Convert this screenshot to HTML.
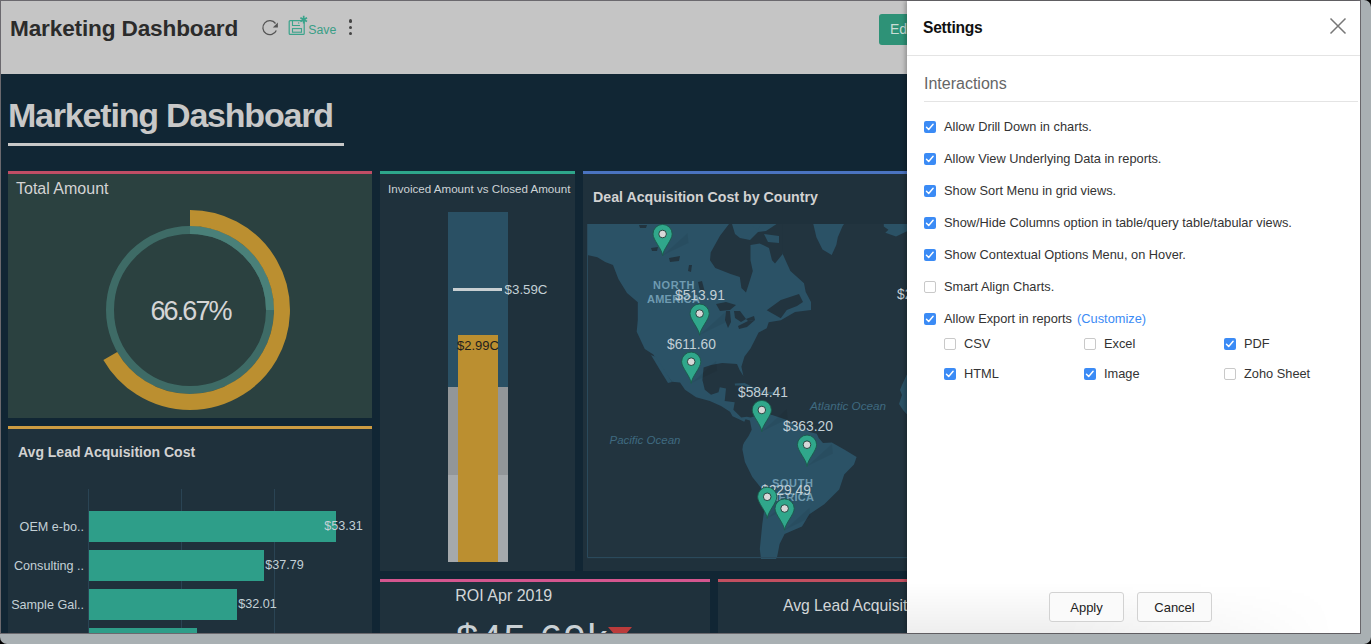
<!DOCTYPE html>
<html><head><meta charset="utf-8">
<style>
*{box-sizing:border-box;margin:0;padding:0}
html,body{width:1371px;height:644px;overflow:hidden;background:#000;font-family:"Liberation Sans",sans-serif}
#frame{position:absolute;left:0;top:0;width:1371px;height:644px;background:#a9b0b3;border-radius:0 7px 7px 7px}
.abs{position:absolute}
#win{position:absolute;left:0;top:0;width:1361px;height:634px;overflow:hidden;background:#112634}
.t{position:absolute;white-space:nowrap;line-height:1}
.w{position:absolute;background:#1f313c}
#panel{position:absolute;left:907px;top:1px;width:453px;height:632px;background:#fff;box-shadow:-2px 0 4px rgba(0,0,0,0.25)}
.cb{position:absolute;width:12px;height:12px;border-radius:2px}
.cb.on{background:#3b8bf5}
.cb.off{border:1px solid #c9c9c9;background:#fff}
.cb svg{position:absolute;left:0;top:0}
.btn{position:absolute;width:75px;height:30px;border:1px solid #d2d2d2;border-radius:3px;background:#fafafa;font-size:13px;color:#222;text-align:center;line-height:30px}
.lbl{position:absolute;font-size:12.8px;color:#333;white-space:nowrap;line-height:16px}
.dl{color:#c3d0d6;font-size:13px}
.ml{color:#c3d0d6;font-size:13.8px}
</style></head>
<body>
<div id="frame"></div>
<div id="win">
  <!-- header -->
  <div class="abs" style="left:1px;top:1px;width:1359px;height:73px;background:#c5c5c5"></div>
  <div class="t" style="left:10px;top:17.6px;font-size:22.6px;letter-spacing:-0.15px;font-weight:bold;color:#2b2b2b">Marketing Dashboard</div>
  <svg class="abs" style="left:260px;top:18px" width="20" height="19" viewBox="260 18 20 19">
    <path d="M275.5,23.5 A7,7 0 1 0 276.3,30.5" fill="none" stroke="#555" stroke-width="1.3"/>
    <path d="M272.8,27.6 L277.9,27.6 L277.9,22.6 Z" fill="#555"/>
  </svg>
  <svg class="abs" style="left:286px;top:14px" width="24" height="23" viewBox="286 14 24 23">
    <rect x="289.2" y="20.6" width="15" height="13.8" rx="1" fill="none" stroke="#3aa38b" stroke-width="1.2"/>
    <path d="M292.5,21 V25.5 H300" fill="none" stroke="#3aa38b" stroke-width="1.1"/>
    <rect x="292.5" y="28.6" width="9" height="3.6" fill="none" stroke="#3aa38b" stroke-width="1.1"/>
    <circle cx="298.7" cy="23" r="0.7" fill="#3aa38b"/>
    <path d="M303.7,15.8 V23.4 M300.4,17.7 L307,21.5 M307,17.7 L300.4,21.5" stroke="#3aa38b" stroke-width="1.7"/>
  </svg>
  <div class="t" style="left:308.3px;top:24px;font-size:12.3px;color:#3a9e86">Save</div>
  <div class="abs" style="left:349.2px;top:19.4px;width:3.2px;height:3.2px;border-radius:50%;background:#444"></div>
  <div class="abs" style="left:349.2px;top:25.5px;width:3.2px;height:3.2px;border-radius:50%;background:#444"></div>
  <div class="abs" style="left:349.2px;top:31.5px;width:3.2px;height:3.2px;border-radius:50%;background:#444"></div>
  <div class="abs" style="left:879px;top:14px;width:40px;height:31px;background:#2e9277;border-radius:3px"></div>
  <div class="t" style="left:890px;top:22px;font-size:14px;color:#c9ddd6">Ed</div>

  <!-- dashboard title -->
  <div class="t" style="left:8px;top:97.5px;font-size:34px;letter-spacing:-1.2px;font-weight:bold;color:#c8c8c8">Marketing Dashboard</div>
  <div class="abs" style="left:8px;top:143px;width:336px;height:3px;background:#c8c8c8"></div>

  <!-- W1 Total Amount -->
  <div class="w" style="left:8px;top:171px;width:364px;height:247px;background:#2b4140;border-top:3px solid #c04d65"></div>
  <div class="t" style="left:16px;top:181px;font-size:16px;color:#d4d4d4">Total Amount</div>
  <svg class="abs" style="left:80px;top:200px" width="220" height="220" viewBox="80 200 220 220">
    <circle cx="190" cy="310" r="80" fill="none" stroke="#3e6b66" stroke-width="8"/>
    <path d="M190,230 A80,80 0 0 1 270,310" fill="none" stroke="#4a8079" stroke-width="8"/>
    <path d="M190,218 A92,92 0 1 1 110.3,356" fill="none" stroke="#bb8f30" stroke-width="16"/>
  </svg>
  <div class="t" style="left:150.5px;top:297.5px;font-size:27px;letter-spacing:-1.9px;color:#d5d5d5">66.67%</div>

  <!-- W2 Avg Lead Acquisition Cost -->
  <div class="w" style="left:8px;top:426px;width:364px;height:210px;border-top:3px solid #cc9b42"></div>
  <div class="t" style="left:18px;top:444.7px;font-size:14px;font-weight:bold;color:#d2d2d2">Avg Lead Acquisition Cost</div>
  <div class="abs" style="left:88px;top:489px;width:1px;height:150px;background:#2a4454"></div>
  <div class="abs" style="left:181px;top:489px;width:1px;height:150px;background:#2a4454"></div>
  <div class="abs" style="left:274px;top:489px;width:1px;height:150px;background:#2a4454"></div>
  <div class="abs" style="left:89px;top:511px;width:247px;height:31px;background:#2e9e89"></div>
  <div class="abs" style="left:89px;top:550px;width:175px;height:31px;background:#2e9e89"></div>
  <div class="abs" style="left:89px;top:589px;width:148px;height:31px;background:#2e9e89"></div>
  <div class="abs" style="left:89px;top:628px;width:108px;height:31px;background:#2e9e89"></div>
  <div class="t dl" style="font-size:12.6px;right:1277px;top:520.5px">OEM e-bo..</div>
  <div class="t dl" style="font-size:12.6px;right:1277px;top:559.5px">Consulting ..</div>
  <div class="t dl" style="font-size:12.6px;right:1277px;top:598.5px">Sample Gal..</div>
  <div class="t dl" style="left:324.3px;top:520.4px;font-size:12.6px">$53.31</div>
  <div class="t dl" style="left:265.3px;top:559.4px;font-size:12.6px">$37.79</div>
  <div class="t dl" style="left:238.3px;top:598.4px;font-size:12.6px">$32.01</div>

  <!-- W3 Invoiced -->
  <div class="w" style="left:380px;top:171px;width:195px;height:400px;border-top:3px solid #2ea68b"></div>
  <div class="t" style="left:388px;top:183px;font-size:11.6px;color:#cdd3d6">Invoiced Amount vs Closed Amount</div>
  <div class="abs" style="left:447.7px;top:212px;width:60.3px;height:175px;background:#2a5064"></div>
  <div class="abs" style="left:447.7px;top:387px;width:60.3px;height:88px;background:#929699"></div>
  <div class="abs" style="left:447.7px;top:475px;width:60.3px;height:87px;background:#a5a9ac"></div>
  <div class="abs" style="left:457.6px;top:334.5px;width:40.2px;height:227.5px;background:#bb8f30"></div>
  <div class="abs" style="left:453px;top:288px;width:49px;height:3px;background:#c8cfd2"></div>
  <div class="t dl" style="left:504.6px;top:283px;font-size:13.3px">$3.59C</div>
  <div class="t" style="left:457px;top:339px;font-size:13px;color:#1e1e1e">$2.99C</div>

  <!-- W4 Deal -->
  <div class="w" style="left:583px;top:171px;width:330px;height:400px;border-top:3px solid #4a73c0"></div>
  <div class="t" style="left:593px;top:190.3px;font-size:14.2px;font-weight:bold;color:#d2d2d2">Deal Acquisition Cost by Country</div>
  <svg class="abs" style="left:587px;top:224px" width="320" height="335" viewBox="587 224 320 335">
<rect x="587" y="224" width="320" height="335" fill="#22343f"/>
<polygon points="587,224 776.6,224 779.6,240.4 782.7,254 790.4,271 804,283.3 805.7,292 811,302 811,310 795,312 780.8,320.3 768.7,322.3 766.7,328.3 758.6,332.4 754.6,340.4 750.5,348.5 744.5,356.6 741.4,366.7 743.4,376.1 739.6,370 737,364 733.4,363.7 722.2,363.1 711,365 703.6,367.5 702.4,379.9 704.8,389.8 711,394.8 718.5,392.3 719.8,387.3 726,388.6 724.7,401 734.7,402.2 733.4,409.7 736.2,412.5 741.2,417.4 746.8,416.8 750.5,417.4 759.5,414.7 772.2,414.9 787,420 809.4,432 816.8,433.7 818.7,438 823,443 831.8,442.4 844.2,449.6 856.6,457 854,464.5 844.2,474.5 839.2,489.4 824.3,504.2 809.4,514.2 802,526.6 784.6,534 779.6,544 777.2,556.4 776,559 761,559 759.8,549 762.3,524 764.7,506.7 762.3,489.4 752.3,477 744.9,462 742.4,449.6 743,445 744.3,442.3 748.6,436 751.7,429.8 749.9,420.5 745.5,419.3 744.3,421.8 738,418.7 732.5,416.2 730,411.8 721,406 709.8,401 696.1,397.3 685,389.8 680,382.4 672,381.7 660,366 653.3,354.4 644.8,349 636.7,331.8 637.8,320 637.8,302.3 627,293 618.4,279 613,265 605.2,262 597.4,257.3 587.3,255" fill="#2b5266"/>
<polygon points="651,355 656,357 672,382 668,383 660,370" fill="#2b5266"/>
<polygon points="813.3,224 844,224 842.4,226.6 837.8,237.3 836.3,245 831.7,255 822.5,249.6 816.4,237.3" fill="#2b5266"/>
<polygon points="883.8,224 907,224 907,231.2 896,236.5 885.3,232.7 888.4,229.7 883.8,226.6" fill="#2b5266"/>
<polygon points="906.6,375 902,385 900,390 902,395 899,404 903,410 906.6,414 907,414 907,375" fill="#2b5266"/>
<polygon points="734.7,383.6 744.6,383 755.8,388.6 767,392.3 766,393.8 755,390.5 744,385.5 735,385.5" fill="#2b5266"/>
<polygon points="767,391.7 774.4,392 774,394.8 767.5,394" fill="#2b5266"/>
<polygon points="729,224 732,224 735,234 740,238 750,240 758,232 766,231 776.6,224 782.7,224 782.7,254 775,263.4 772,260.3 769,248 759.7,243.4 750.5,245 750.5,260.3 752.8,271 749,283.3 746,292.5 741.4,288 739.8,277 730.6,274 715.3,268 710,260.3 710.7,252.6 720,235.8" fill="#22343f"/>
<polygon points="766.7,310.2 780.8,300 799,294 803,302 797,306 786.8,310 780.8,318.2" fill="#22343f"/>
<polygon points="716,304 726,302 736,305 730,310 720,311" fill="#22343f"/><polygon points="726,311 730,311 731,322 728,328 725,320" fill="#22343f"/><polygon points="734,311 740,311 746,319 741,322 735,318" fill="#22343f"/><polygon points="738,326 748,321 755,320 747,327 739,329" fill="#22343f"/><polygon points="746,319 754,316 755,320 748,321" fill="#22343f"/><polygon points="639,225 647,225 646,228 640,228" fill="#22343f"/><polygon points="651,248 658,247 657,251 652,251" fill="#22343f"/><polygon points="669,258 680,256 679,261 670,262" fill="#22343f"/><polygon points="689,265 692,265 691,272 688,271" fill="#22343f"/><polygon points="698,282 702,281 704.6,291 700,291" fill="#22343f"/>
<polygon points="764,234 779,236 779,243 768,242" fill="#2b5266"/><polygon points="752,226 760,226 758,230" fill="#2b5266"/>
<path d="M587.5,224 V557.5 H907" fill="none" stroke="#2a4a5c" stroke-width="1"/>
</svg>
  <div class="t" style="left:653px;top:279.5px;font-size:11px;font-weight:bold;color:#6f9bb1;letter-spacing:0.6px">NORTH</div>
  <div class="t" style="left:647px;top:293.5px;font-size:11px;font-weight:bold;color:#6f9bb1;letter-spacing:0.25px">AMERICA</div>
  <div class="t" style="left:772px;top:477.5px;font-size:11px;font-weight:bold;color:#6f9bb1;letter-spacing:0.6px">SOUTH</div>
  <div class="t" style="left:761px;top:491.5px;font-size:11px;font-weight:bold;color:#6f9bb1;letter-spacing:0.25px">AMERICA</div>
  <div class="t" style="left:609.5px;top:434.5px;font-size:11.5px;font-style:italic;color:#3f6a80">Pacific Ocean</div>
  <div class="t" style="left:810px;top:399.5px;font-size:11.7px;font-style:italic;color:#3f6a80">Atlantic Ocean</div>
  <div class="t ml" style="left:675px;top:289px">$513.91</div>
  <div class="t ml" style="left:667px;top:338px">$611.60</div>
  <div class="t ml" style="left:738px;top:386px">$584.41</div>
  <div class="t ml" style="left:783px;top:420px">$363.20</div>
  <div class="t ml" style="left:761px;top:484px">$229.49</div>
  <div class="t ml" style="left:897px;top:288px">$2</div>
  <svg class="abs" style="left:587px;top:224px" width="320" height="335" viewBox="587 224 320 335"><path d="M662.6,255.5 L687.6,233 L688.6,243 Z" fill="#000" opacity="0.05"/><path d="M662.6,255.7 C662.1,249 653.0,240 653.0,234 A9.6 9.6 0 1 1 672.2,234 C672.2,240 663.1,249 662.6,255.7 Z" fill="#30a78b" stroke="#1b5a4b" stroke-width="0.9"/><circle cx="662.6" cy="234" r="3.8" fill="#d8d8d8" stroke="#1e3a36" stroke-width="0.9"/><path d="M699.6,335.1 L724.6,312.6 L725.6,322.6 Z" fill="#000" opacity="0.05"/><path d="M699.6,335.3 C699.1,328.6 690.0,319.6 690.0,313.6 A9.6 9.6 0 1 1 709.2,313.6 C709.2,319.6 700.1,328.6 699.6,335.3 Z" fill="#30a78b" stroke="#1b5a4b" stroke-width="0.9"/><circle cx="699.6" cy="313.6" r="3.8" fill="#d8d8d8" stroke="#1e3a36" stroke-width="0.9"/><path d="M691.2,383.2 L716.2,360.7 L717.2,370.7 Z" fill="#000" opacity="0.05"/><path d="M691.2,383.4 C690.7,376.7 681.6,367.7 681.6,361.7 A9.6 9.6 0 1 1 700.8000000000001,361.7 C700.8000000000001,367.7 691.7,376.7 691.2,383.4 Z" fill="#30a78b" stroke="#1b5a4b" stroke-width="0.9"/><circle cx="691.2" cy="361.7" r="3.8" fill="#d8d8d8" stroke="#1e3a36" stroke-width="0.9"/><path d="M761.8,431.5 L786.8,409 L787.8,419 Z" fill="#000" opacity="0.05"/><path d="M761.8,431.7 C761.3,425 752.1999999999999,416 752.1999999999999,410 A9.6 9.6 0 1 1 771.4,410 C771.4,416 762.3,425 761.8,431.7 Z" fill="#30a78b" stroke="#1b5a4b" stroke-width="0.9"/><circle cx="761.8" cy="410" r="3.8" fill="#d8d8d8" stroke="#1e3a36" stroke-width="0.9"/><path d="M807,466.2 L832,443.7 L833,453.7 Z" fill="#000" opacity="0.05"/><path d="M807,466.4 C806.5,459.7 797.4,450.7 797.4,444.7 A9.6 9.6 0 1 1 816.6,444.7 C816.6,450.7 807.5,459.7 807,466.4 Z" fill="#30a78b" stroke="#1b5a4b" stroke-width="0.9"/><circle cx="807" cy="444.7" r="3.8" fill="#d8d8d8" stroke="#1e3a36" stroke-width="0.9"/><path d="M767.2,518.3 L792.2,495.8 L793.2,505.8 Z" fill="#000" opacity="0.05"/><path d="M767.2,518.5 C766.7,511.8 757.6,502.8 757.6,496.8 A9.6 9.6 0 1 1 776.8000000000001,496.8 C776.8000000000001,502.8 767.7,511.8 767.2,518.5 Z" fill="#30a78b" stroke="#1b5a4b" stroke-width="0.9"/><circle cx="767.2" cy="496.8" r="3.8" fill="#d8d8d8" stroke="#1e3a36" stroke-width="0.9"/><path d="M784.6,530.0 L809.6,507.5 L810.6,517.5 Z" fill="#000" opacity="0.05"/><path d="M784.6,530.2 C784.1,523.5 775.0,514.5 775.0,508.5 A9.6 9.6 0 1 1 794.2,508.5 C794.2,514.5 785.1,523.5 784.6,530.2 Z" fill="#30a78b" stroke="#1b5a4b" stroke-width="0.9"/><circle cx="784.6" cy="508.5" r="3.8" fill="#d8d8d8" stroke="#1e3a36" stroke-width="0.9"/></svg>

  <!-- W5 ROI -->
  <div class="w" style="left:380px;top:579px;width:330px;height:60px;border-top:3px solid #d4568f"></div>
  <div class="t" style="left:455.3px;top:587.8px;font-size:16px;color:#d2d6d8">ROI Apr 2019</div>
  <div class="t" style="left:456px;top:619px;font-size:40px;letter-spacing:1.5px;color:#c9d0d4">$45.69k</div>
  <div class="abs" style="left:608px;top:627px;width:0;height:0;border-left:12px solid transparent;border-right:12px solid transparent;border-top:14px solid #bb3b3b"></div>

  <!-- W6 -->
  <div class="w" style="left:718px;top:579px;width:200px;height:60px;border-top:3px solid #c24f60"></div>
  <div class="t" style="left:783px;top:598.3px;font-size:15.7px;color:#d2d6d8">Avg Lead Acquisition Cost</div>

  <!-- window borders -->
  <div class="abs" style="left:0;top:0;width:1361px;height:1px;background:#6b696e"></div>
  <div class="abs" style="left:0;top:0;width:1px;height:634px;background:#6b696e"></div>
  <div class="abs" style="left:1360px;top:0;width:1px;height:634px;background:#6b696e"></div>
  <div class="abs" style="left:0;top:633px;width:1361px;height:1px;background:#6b696e"></div>

  <div id="panel">
    <div class="abs" style="left:0;top:582px;width:453px;height:50px;background:linear-gradient(rgba(0,0,0,0),rgba(0,0,0,0.065));-webkit-mask-image:linear-gradient(to right,#000 35%,transparent 95%)"></div>
    <div class="abs" style="left:16px;top:17.6px;font-size:15.6px;letter-spacing:-0.25px;font-weight:bold;color:#111">Settings</div>
    <div class="abs" style="left:0;top:54px;width:453px;height:1px;background:#e4e4e4"></div>
    <div class="abs" style="left:17px;top:74px;font-size:16px;color:#666">Interactions</div>
    <div class="abs" style="left:17px;top:100px;width:434px;height:1px;background:#e4e4e4"></div>
    <div class="cb on" style="left:17px;top:120px"><svg width="12" height="12" viewBox="0 0 12 12"><path d="M2.5,6.2 L4.7,8.5 L9.1,3.2" stroke="#fff" stroke-width="1.45" fill="none" stroke-linecap="round" stroke-linejoin="round"/></svg></div>
    <div class="lbl" style="left:37px;top:118px">Allow Drill Down in charts.</div>
    <div class="cb on" style="left:17px;top:152px"><svg width="12" height="12" viewBox="0 0 12 12"><path d="M2.5,6.2 L4.7,8.5 L9.1,3.2" stroke="#fff" stroke-width="1.45" fill="none" stroke-linecap="round" stroke-linejoin="round"/></svg></div>
    <div class="lbl" style="left:37px;top:150px">Allow View Underlying Data in reports.</div>
    <div class="cb on" style="left:17px;top:184px"><svg width="12" height="12" viewBox="0 0 12 12"><path d="M2.5,6.2 L4.7,8.5 L9.1,3.2" stroke="#fff" stroke-width="1.45" fill="none" stroke-linecap="round" stroke-linejoin="round"/></svg></div>
    <div class="lbl" style="left:37px;top:182px">Show Sort Menu in grid views.</div>
    <div class="cb on" style="left:17px;top:216px"><svg width="12" height="12" viewBox="0 0 12 12"><path d="M2.5,6.2 L4.7,8.5 L9.1,3.2" stroke="#fff" stroke-width="1.45" fill="none" stroke-linecap="round" stroke-linejoin="round"/></svg></div>
    <div class="lbl" style="left:37px;top:214px">Show/Hide Columns option in table/query table/tabular views.</div>
    <div class="cb on" style="left:17px;top:248px"><svg width="12" height="12" viewBox="0 0 12 12"><path d="M2.5,6.2 L4.7,8.5 L9.1,3.2" stroke="#fff" stroke-width="1.45" fill="none" stroke-linecap="round" stroke-linejoin="round"/></svg></div>
    <div class="lbl" style="left:37px;top:246px">Show Contextual Options Menu, on Hover.</div>
    <div class="cb off" style="left:17px;top:280px"></div>
    <div class="lbl" style="left:37px;top:278px">Smart Align Charts.</div>
    <div class="cb on" style="left:17px;top:312px"><svg width="12" height="12" viewBox="0 0 12 12"><path d="M2.5,6.2 L4.7,8.5 L9.1,3.2" stroke="#fff" stroke-width="1.45" fill="none" stroke-linecap="round" stroke-linejoin="round"/></svg></div>
    <div class="lbl" style="left:37px;top:310px">Allow Export in reports <span style="color:#3b8bf5;margin-left:1.5px">(Customize)</span></div>
    <div class="cb off" style="left:37px;top:337px"></div>
    <div class="lbl" style="left:57px;top:335px">CSV</div>
    <div class="cb off" style="left:177px;top:337px"></div>
    <div class="lbl" style="left:197px;top:335px">Excel</div>
    <div class="cb on" style="left:317px;top:337px"><svg width="12" height="12" viewBox="0 0 12 12"><path d="M2.5,6.2 L4.7,8.5 L9.1,3.2" stroke="#fff" stroke-width="1.45" fill="none" stroke-linecap="round" stroke-linejoin="round"/></svg></div>
    <div class="lbl" style="left:337px;top:335px">PDF</div>
    <div class="cb on" style="left:37px;top:367px"><svg width="12" height="12" viewBox="0 0 12 12"><path d="M2.5,6.2 L4.7,8.5 L9.1,3.2" stroke="#fff" stroke-width="1.45" fill="none" stroke-linecap="round" stroke-linejoin="round"/></svg></div>
    <div class="lbl" style="left:57px;top:365px">HTML</div>
    <div class="cb on" style="left:177px;top:367px"><svg width="12" height="12" viewBox="0 0 12 12"><path d="M2.5,6.2 L4.7,8.5 L9.1,3.2" stroke="#fff" stroke-width="1.45" fill="none" stroke-linecap="round" stroke-linejoin="round"/></svg></div>
    <div class="lbl" style="left:197px;top:365px">Image</div>
    <div class="cb off" style="left:317px;top:367px"></div>
    <div class="lbl" style="left:337px;top:365px">Zoho Sheet</div>
    <div class="abs" style="left:422px;top:16px;width:18px;height:18px">
      <svg width="18" height="18" viewBox="0 0 18 18"><path d="M1.5 1.5L16.5 16.5M16.5 1.5L1.5 16.5" stroke="#777" stroke-width="1.5" fill="none"/></svg>
    </div>
    <div class="btn" style="left:142px;top:591px">Apply</div>
    <div class="btn" style="left:230px;top:591px">Cancel</div>

  </div>
</div>
</body></html>
